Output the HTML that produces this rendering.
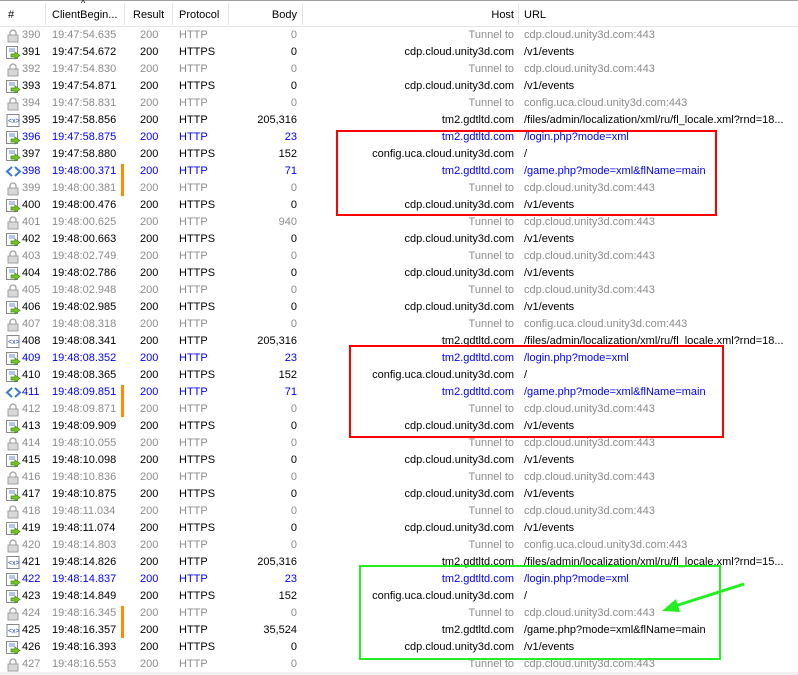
<!DOCTYPE html><html><head><style>
body{margin:0;width:798px;height:675px;overflow:hidden;background:#fff;font-family:"Liberation Sans",Tahoma,sans-serif;font-size:11px;position:relative}
.hd{position:absolute;left:0;top:0;width:798px;height:25px;border-top:1px solid #a0a0a0;border-bottom:1px solid #e5e5e5;background:#fff}
.hd span{position:absolute;top:8px;color:#000}
.hd i{position:absolute;top:2px;width:1px;height:22px;background:#e5e5e5}
.r{position:absolute;left:0;width:798px;height:17px;line-height:17px;white-space:nowrap}
.r span{position:absolute;top:0}
.n{left:22px}.t{left:52px}.s{left:140px}.p{left:179px}.b{right:501px}.h{right:284px}.u{left:524px}
.g{color:#8c8c8c}.k{color:#000}.bl{color:#0000ff}
.ic{position:absolute;left:5px;top:1px;width:17px;height:15px}
.ob{position:absolute;left:121px;width:3px;background:#ff8c00}
.box{position:absolute;border:2px solid}
.foot{position:absolute;left:0;top:672px;width:798px;height:3px;background:#f0f0f0}
</style></head><body>
<svg width="0" height="0" style="position:absolute"><defs>
<g id="lk"><rect x="3" y="7" width="10" height="7" fill="#d8d8d8" stroke="#a0a0a0"/><path d="M5 7V5a3 3 0 0 1 6 0v2" fill="none" stroke="#a0a0a0" stroke-width="1.3"/></g>
<g id="ar"><rect x="1.5" y="1.5" width="11" height="12" fill="#fff" stroke="#888"/><path d="M4 4h6M4 6h6" stroke="#6a8fd0"/><path d="M6 9h4V7l5 3.5-5 3.5v-2H6z" fill="#7ac22a" stroke="#3d8a10" stroke-width=".7"/></g>
<g id="xm"><rect x="2" y="1.5" width="12" height="12" fill="#fff" stroke="#888"/><text x="3" y="10" font-size="7" fill="#1a3fc0" font-family="Liberation Sans">&lt;x&gt;</text></g>
<g id="co"><path d="M7 3L2 7.5 7 12M10 3l5 4.5L10 12" fill="none" stroke="#3a7ad8" stroke-width="2"/></g>
</defs></svg>
<div class="hd"><span style="left:8px">#</span><i style="left:45px"></i><span style="left:52px">ClientBegin...</span><span style="left:81px;top:-3px;font-size:9px">^</span><i style="left:124px"></i><span style="left:133px">Result</span><i style="left:172px"></i><span style="left:179px">Protocol</span><i style="left:228px"></i><span style="right:501px">Body</span><i style="left:302px"></i><span style="right:284px">Host</span><i style="left:518px"></i><span style="left:524px">URL</span></div>

<div class="r g" style="top:27px"><svg class="ic"><use href="#lk"/></svg><span class="n">390</span><span class="t">19:47:54.635</span><span class="s">200</span><span class="p">HTTP</span><span class="b">0</span><span class="h">Tunnel to</span><span class="u">cdp.cloud.unity3d.com:443</span></div>
<div class="r k" style="top:44px"><svg class="ic"><use href="#ar"/></svg><span class="n">391</span><span class="t">19:47:54.672</span><span class="s">200</span><span class="p">HTTPS</span><span class="b">0</span><span class="h">cdp.cloud.unity3d.com</span><span class="u">/v1/events</span></div>
<div class="r g" style="top:61px"><svg class="ic"><use href="#lk"/></svg><span class="n">392</span><span class="t">19:47:54.830</span><span class="s">200</span><span class="p">HTTP</span><span class="b">0</span><span class="h">Tunnel to</span><span class="u">cdp.cloud.unity3d.com:443</span></div>
<div class="r k" style="top:78px"><svg class="ic"><use href="#ar"/></svg><span class="n">393</span><span class="t">19:47:54.871</span><span class="s">200</span><span class="p">HTTPS</span><span class="b">0</span><span class="h">cdp.cloud.unity3d.com</span><span class="u">/v1/events</span></div>
<div class="r g" style="top:95px"><svg class="ic"><use href="#lk"/></svg><span class="n">394</span><span class="t">19:47:58.831</span><span class="s">200</span><span class="p">HTTP</span><span class="b">0</span><span class="h">Tunnel to</span><span class="u">config.uca.cloud.unity3d.com:443</span></div>
<div class="r k" style="top:112px"><svg class="ic"><use href="#xm"/></svg><span class="n">395</span><span class="t">19:47:58.856</span><span class="s">200</span><span class="p">HTTP</span><span class="b">205,316</span><span class="h">tm2.gdtltd.com</span><span class="u">/files/admin/localization/xml/ru/fl_locale.xml?rnd=18...</span></div>
<div class="r bl" style="top:129px"><svg class="ic"><use href="#ar"/></svg><span class="n">396</span><span class="t">19:47:58.875</span><span class="s">200</span><span class="p">HTTP</span><span class="b">23</span><span class="h">tm2.gdtltd.com</span><span class="u">/login.php?mode=xml</span></div>
<div class="r k" style="top:146px"><svg class="ic"><use href="#ar"/></svg><span class="n">397</span><span class="t">19:47:58.880</span><span class="s">200</span><span class="p">HTTPS</span><span class="b">152</span><span class="h">config.uca.cloud.unity3d.com</span><span class="u">/</span></div>
<div class="r bl" style="top:163px"><svg class="ic"><use href="#co"/></svg><span class="n">398</span><span class="t">19:48:00.371</span><span class="s">200</span><span class="p">HTTP</span><span class="b">71</span><span class="h">tm2.gdtltd.com</span><span class="u">/game.php?mode=xml&amp;flName=main</span></div>
<div class="r g" style="top:180px"><svg class="ic"><use href="#lk"/></svg><span class="n">399</span><span class="t">19:48:00.381</span><span class="s">200</span><span class="p">HTTP</span><span class="b">0</span><span class="h">Tunnel to</span><span class="u">cdp.cloud.unity3d.com:443</span></div>
<div class="r k" style="top:197px"><svg class="ic"><use href="#ar"/></svg><span class="n">400</span><span class="t">19:48:00.476</span><span class="s">200</span><span class="p">HTTPS</span><span class="b">0</span><span class="h">cdp.cloud.unity3d.com</span><span class="u">/v1/events</span></div>
<div class="r g" style="top:214px"><svg class="ic"><use href="#lk"/></svg><span class="n">401</span><span class="t">19:48:00.625</span><span class="s">200</span><span class="p">HTTP</span><span class="b">940</span><span class="h">Tunnel to</span><span class="u">cdp.cloud.unity3d.com:443</span></div>
<div class="r k" style="top:231px"><svg class="ic"><use href="#ar"/></svg><span class="n">402</span><span class="t">19:48:00.663</span><span class="s">200</span><span class="p">HTTPS</span><span class="b">0</span><span class="h">cdp.cloud.unity3d.com</span><span class="u">/v1/events</span></div>
<div class="r g" style="top:248px"><svg class="ic"><use href="#lk"/></svg><span class="n">403</span><span class="t">19:48:02.749</span><span class="s">200</span><span class="p">HTTP</span><span class="b">0</span><span class="h">Tunnel to</span><span class="u">cdp.cloud.unity3d.com:443</span></div>
<div class="r k" style="top:265px"><svg class="ic"><use href="#ar"/></svg><span class="n">404</span><span class="t">19:48:02.786</span><span class="s">200</span><span class="p">HTTPS</span><span class="b">0</span><span class="h">cdp.cloud.unity3d.com</span><span class="u">/v1/events</span></div>
<div class="r g" style="top:282px"><svg class="ic"><use href="#lk"/></svg><span class="n">405</span><span class="t">19:48:02.948</span><span class="s">200</span><span class="p">HTTP</span><span class="b">0</span><span class="h">Tunnel to</span><span class="u">cdp.cloud.unity3d.com:443</span></div>
<div class="r k" style="top:299px"><svg class="ic"><use href="#ar"/></svg><span class="n">406</span><span class="t">19:48:02.985</span><span class="s">200</span><span class="p">HTTPS</span><span class="b">0</span><span class="h">cdp.cloud.unity3d.com</span><span class="u">/v1/events</span></div>
<div class="r g" style="top:316px"><svg class="ic"><use href="#lk"/></svg><span class="n">407</span><span class="t">19:48:08.318</span><span class="s">200</span><span class="p">HTTP</span><span class="b">0</span><span class="h">Tunnel to</span><span class="u">config.uca.cloud.unity3d.com:443</span></div>
<div class="r k" style="top:333px"><svg class="ic"><use href="#xm"/></svg><span class="n">408</span><span class="t">19:48:08.341</span><span class="s">200</span><span class="p">HTTP</span><span class="b">205,316</span><span class="h">tm2.gdtltd.com</span><span class="u">/files/admin/localization/xml/ru/fl_locale.xml?rnd=18...</span></div>
<div class="r bl" style="top:350px"><svg class="ic"><use href="#ar"/></svg><span class="n">409</span><span class="t">19:48:08.352</span><span class="s">200</span><span class="p">HTTP</span><span class="b">23</span><span class="h">tm2.gdtltd.com</span><span class="u">/login.php?mode=xml</span></div>
<div class="r k" style="top:367px"><svg class="ic"><use href="#ar"/></svg><span class="n">410</span><span class="t">19:48:08.365</span><span class="s">200</span><span class="p">HTTPS</span><span class="b">152</span><span class="h">config.uca.cloud.unity3d.com</span><span class="u">/</span></div>
<div class="r bl" style="top:384px"><svg class="ic"><use href="#co"/></svg><span class="n">411</span><span class="t">19:48:09.851</span><span class="s">200</span><span class="p">HTTP</span><span class="b">71</span><span class="h">tm2.gdtltd.com</span><span class="u">/game.php?mode=xml&amp;flName=main</span></div>
<div class="r g" style="top:401px"><svg class="ic"><use href="#lk"/></svg><span class="n">412</span><span class="t">19:48:09.871</span><span class="s">200</span><span class="p">HTTP</span><span class="b">0</span><span class="h">Tunnel to</span><span class="u">cdp.cloud.unity3d.com:443</span></div>
<div class="r k" style="top:418px"><svg class="ic"><use href="#ar"/></svg><span class="n">413</span><span class="t">19:48:09.909</span><span class="s">200</span><span class="p">HTTPS</span><span class="b">0</span><span class="h">cdp.cloud.unity3d.com</span><span class="u">/v1/events</span></div>
<div class="r g" style="top:435px"><svg class="ic"><use href="#lk"/></svg><span class="n">414</span><span class="t">19:48:10.055</span><span class="s">200</span><span class="p">HTTP</span><span class="b">0</span><span class="h">Tunnel to</span><span class="u">cdp.cloud.unity3d.com:443</span></div>
<div class="r k" style="top:452px"><svg class="ic"><use href="#ar"/></svg><span class="n">415</span><span class="t">19:48:10.098</span><span class="s">200</span><span class="p">HTTPS</span><span class="b">0</span><span class="h">cdp.cloud.unity3d.com</span><span class="u">/v1/events</span></div>
<div class="r g" style="top:469px"><svg class="ic"><use href="#lk"/></svg><span class="n">416</span><span class="t">19:48:10.836</span><span class="s">200</span><span class="p">HTTP</span><span class="b">0</span><span class="h">Tunnel to</span><span class="u">cdp.cloud.unity3d.com:443</span></div>
<div class="r k" style="top:486px"><svg class="ic"><use href="#ar"/></svg><span class="n">417</span><span class="t">19:48:10.875</span><span class="s">200</span><span class="p">HTTPS</span><span class="b">0</span><span class="h">cdp.cloud.unity3d.com</span><span class="u">/v1/events</span></div>
<div class="r g" style="top:503px"><svg class="ic"><use href="#lk"/></svg><span class="n">418</span><span class="t">19:48:11.034</span><span class="s">200</span><span class="p">HTTP</span><span class="b">0</span><span class="h">Tunnel to</span><span class="u">cdp.cloud.unity3d.com:443</span></div>
<div class="r k" style="top:520px"><svg class="ic"><use href="#ar"/></svg><span class="n">419</span><span class="t">19:48:11.074</span><span class="s">200</span><span class="p">HTTPS</span><span class="b">0</span><span class="h">cdp.cloud.unity3d.com</span><span class="u">/v1/events</span></div>
<div class="r g" style="top:537px"><svg class="ic"><use href="#lk"/></svg><span class="n">420</span><span class="t">19:48:14.803</span><span class="s">200</span><span class="p">HTTP</span><span class="b">0</span><span class="h">Tunnel to</span><span class="u">config.uca.cloud.unity3d.com:443</span></div>
<div class="r k" style="top:554px"><svg class="ic"><use href="#xm"/></svg><span class="n">421</span><span class="t">19:48:14.826</span><span class="s">200</span><span class="p">HTTP</span><span class="b">205,316</span><span class="h">tm2.gdtltd.com</span><span class="u">/files/admin/localization/xml/ru/fl_locale.xml?rnd=15...</span></div>
<div class="r bl" style="top:571px"><svg class="ic"><use href="#ar"/></svg><span class="n">422</span><span class="t">19:48:14.837</span><span class="s">200</span><span class="p">HTTP</span><span class="b">23</span><span class="h">tm2.gdtltd.com</span><span class="u">/login.php?mode=xml</span></div>
<div class="r k" style="top:588px"><svg class="ic"><use href="#ar"/></svg><span class="n">423</span><span class="t">19:48:14.849</span><span class="s">200</span><span class="p">HTTPS</span><span class="b">152</span><span class="h">config.uca.cloud.unity3d.com</span><span class="u">/</span></div>
<div class="r g" style="top:605px"><svg class="ic"><use href="#lk"/></svg><span class="n">424</span><span class="t">19:48:16.345</span><span class="s">200</span><span class="p">HTTP</span><span class="b">0</span><span class="h">Tunnel to</span><span class="u">cdp.cloud.unity3d.com:443</span></div>
<div class="r k" style="top:622px"><svg class="ic"><use href="#xm"/></svg><span class="n">425</span><span class="t">19:48:16.357</span><span class="s">200</span><span class="p">HTTP</span><span class="b">35,524</span><span class="h">tm2.gdtltd.com</span><span class="u">/game.php?mode=xml&amp;flName=main</span></div>
<div class="r k" style="top:639px"><svg class="ic"><use href="#ar"/></svg><span class="n">426</span><span class="t">19:48:16.393</span><span class="s">200</span><span class="p">HTTPS</span><span class="b">0</span><span class="h">cdp.cloud.unity3d.com</span><span class="u">/v1/events</span></div>
<div class="r g" style="top:656px"><svg class="ic"><use href="#lk"/></svg><span class="n">427</span><span class="t">19:48:16.553</span><span class="s">200</span><span class="p">HTTP</span><span class="b">0</span><span class="h">Tunnel to</span><span class="u">cdp.cloud.unity3d.com:443</span></div>
<div class="foot"></div>

<div class="ob" style="top:164px;height:32px"></div>
<div class="ob" style="top:385px;height:32px"></div>
<div class="ob" style="top:606px;height:32px"></div>

<div class="box" style="left:336px;top:130px;width:377px;height:82px;border-color:#ff0000"></div>
<div class="box" style="left:349px;top:345px;width:371px;height:89px;border-color:#ff0000"></div>
<div class="box" style="left:359px;top:565px;width:358px;height:91px;border-color:#22ee22"></div>
<svg style="position:absolute;left:0;top:0" width="798" height="675"><path d="M744 584L672 607" stroke="#22ee22" stroke-width="3"/><path d="M662 611L676 599 680 612z" fill="#22ee22"/></svg>
</body></html>
